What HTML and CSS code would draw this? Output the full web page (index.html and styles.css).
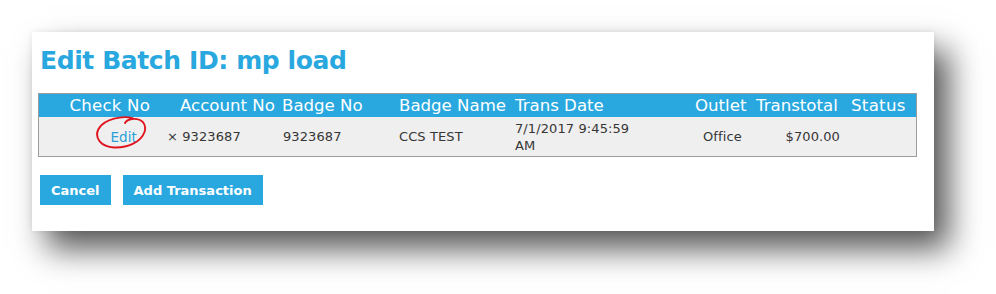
FILE: index.html
```html
<!DOCTYPE html>
<html>
<head>
<meta charset="utf-8">
<link rel="stylesheet" href="styles.css">
</head>
<body>
<div class="card">
  <h1 class="title">Edit Batch ID: mp load</h1>
  <div class="grid">
    <div class="th c1">Check No</div>
    <div class="th c2">Account No</div>
    <div class="th c3">Badge No</div>
    <div class="th c4">Badge Name</div>
    <div class="th c5">Trans Date</div>
    <div class="th c6">Outlet</div>
    <div class="th c7">Transtotal</div>
    <div class="th c8">Status</div>

    <div class="td d1"><a class="edit" href="#">Edit</a>
      <svg class="circle" width="56" height="36" viewBox="0 0 56 36"><path d="M38 2.5 C28 -1 9 3 3.5 13 C-1 22 6 31 19 31.5 C33 32 46 26 49.5 16 C52 8 47 2 37 3 C34 3.5 31.5 4.5 30 7" fill="none" stroke="#e0141e" stroke-width="1.9" stroke-linecap="round"/></svg>
    </div>
    <div class="td d2">× 9323687</div>
    <div class="td d3">9323687</div>
    <div class="td d4">CCS TEST</div>
    <div class="td d5"><span class="date">7/1/2017 9:45:59 AM</span></div>
    <div class="td d6">Office</div>
    <div class="td d7">$700.00</div>
    <div class="td d8"></div>
  </div>
  <div class="actions">
    <button class="btn">Cancel</button>
    <button class="btn">Add Transaction</button>
  </div>
</div>
</body>
</html>
```
FILE: styles.css
```css
html, body {
  margin: 0;
  padding: 0;
  background: #ffffff;
}
body {
  box-sizing: border-box;
  min-height: 294px;
  padding: 32px;
  font-family: "DejaVu Sans", Verdana, sans-serif;
}
.card {
  width: 890px;
  background: #ffffff;
  padding: 14px 6px 26px 6px;
  box-shadow: 15px 18px 30px rgba(0, 0, 0, 0.66), 0 0 6px rgba(0, 0, 0, 0.08);
}
.title {
  margin: 0 0 17px 2px;
  font-size: 25px;
  line-height: 30px;
  font-weight: bold;
  letter-spacing: -0.4px;
  color: #29a8e0;
}
.grid {
  display: grid;
  grid-template-columns: 126px 115px 115px 117px 178px 63px 94px 69px;
  grid-template-rows: 23px 39px;
  width: 877px;
  border: 1px solid #9c9c9c;
  background: #efefef;
}
.th {
  background: #29a8e0;
  color: #ffffff;
  font-size: 16.6px;
  line-height: 23px;
  white-space: nowrap;
}
.td {
  font-size: 13px;
  color: #363636;
  display: flex;
  align-items: center;
  white-space: nowrap;
  letter-spacing: 0.1px;
}
.c1 { text-align: right; padding-right: 15px; letter-spacing: 0.2px; }
.c2 { padding-left: 15px; }
.c3 { padding-left: 2px; }
.c4 { padding-left: 4px; }
.c5 { padding-left: 3px; }
.c6 { padding-left: 5px; }
.c7 { padding-left: 3px; }
.c8 { padding-left: 4px; letter-spacing: 0.3px; }

.d1 { justify-content: flex-end; padding-right: 28px; position: relative; }
.d2 { padding-left: 2px; }
.d3 { padding-left: 3px; }
.d4 { padding-left: 4px; }
.d5 { padding-left: 3px; white-space: normal; }
.d6 { padding-left: 13px; }
.d7 { justify-content: flex-end; padding-right: 7px; }
.date { width: 130px; line-height: 17px; }
.edit {
  color: #2a9fd8;
  text-decoration: none;
  font-size: 13.5px;
}
.circle {
  position: absolute;
  left: 56px;
  top: -1px;
}
.actions {
  display: flex;
  gap: 12px;
  margin: 18px 0 0 2px;
}
.btn {
  height: 30px;
  border: 0;
  background: #29a8e0;
  color: #ffffff;
  font-family: "DejaVu Sans", Verdana, sans-serif;
  font-weight: bold;
  font-size: 13px;
  padding: 0 11px;
}
```
